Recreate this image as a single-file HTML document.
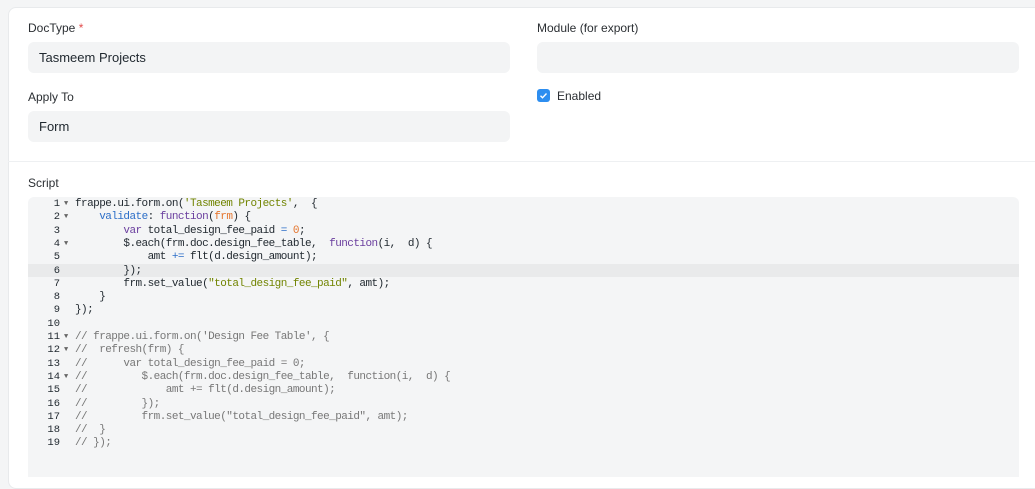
<!DOCTYPE html>
<html><head><meta charset="utf-8"><style>
body{margin:0;background:#f4f5f6;width:1035px;height:465px;overflow:hidden;font-family:"Liberation Sans",sans-serif;}
.card{position:absolute;left:8px;top:7px;width:1040px;height:480px;background:#fff;border:1px solid #e8eaec;border-radius:8px;}
.lbl{position:absolute;font-size:12px;color:#2b2f33;}
.inp{position:absolute;background:#f3f4f5;border-radius:6px;height:31px;font-size:13px;color:#1f272e;line-height:31px;padding-left:11px;box-sizing:border-box;}
.div{position:absolute;left:8px;top:161px;width:1030px;height:1px;background:#eef0f2;}
.ed{position:absolute;left:28px;top:197px;width:991px;height:280px;background:#f4f5f6;border-radius:6px 6px 0 0;font-family:"Liberation Mono",monospace;font-size:11px;letter-spacing:-0.55px;color:#1f272e;}
.ln{position:absolute;left:0;width:991px;height:13.3px;line-height:13.3px;white-space:pre;top:1px}
.n{position:absolute;left:2px;width:30px;text-align:right;color:#1f272e;letter-spacing:0;font-size:10.5px}
.a{position:absolute;left:36px;font-size:7px;color:#666;}
.c{position:absolute;left:47px;}
.k{color:#6a3e9e}.s{color:#718400}.num{color:#e4742c}.m{color:#777}.p{color:#2c6ec8}
</style></head><body>
<div class="card"></div>
<div class="lbl" style="left:28px;top:21px">DocType <span style="color:#e24c4c">*</span></div>
<div class="inp" style="left:28px;top:42px;width:482px">Tasmeem Projects</div>
<div class="lbl" style="left:537px;top:21px">Module (for export)</div>
<div class="inp" style="left:537px;top:42px;width:482px"></div>
<div class="lbl" style="left:28px;top:90px">Apply To</div>
<div class="inp" style="left:28px;top:111px;width:482px">Form</div>
<div style="position:absolute;left:537px;top:89px;width:13px;height:13px;background:#2d8ef0;border-radius:3px;"><svg width="13" height="13"><path d="M3.5 6.8l2 2 4-4.3" fill="none" stroke="#fff" stroke-width="1.4"/></svg></div>
<div class="lbl" style="left:557px;top:89px">Enabled</div>
<div class="div"></div>
<div class="lbl" style="left:28px;top:176px">Script</div>
<div class="ed">
<div style="position:absolute;left:0;top:67px;width:991px;height:13.3px;background:#e9eaeb"></div>
<div class="ln" style="top:1px"><span class="n">1</span><span class="a">▼</span><span class="c">frappe.ui.form.on(<span class="s">'Tasmeem Projects'</span>,  {</span></div>
<div class="ln" style="top:14.3px"><span class="n">2</span><span class="a">▼</span><span class="c">    <span class="p">validate</span>: <span class="k">function</span>(<span class="num">frm</span>) {</span></div>
<div class="ln" style="top:27.6px"><span class="n">3</span><span class="c">        <span class="k">var</span> total_design_fee_paid <span class="p">=</span> <span class="num">0</span>;</span></div>
<div class="ln" style="top:40.9px"><span class="n">4</span><span class="a">▼</span><span class="c">        $.each(frm.doc.design_fee_table,  <span class="k">function</span>(i,  d) {</span></div>
<div class="ln" style="top:54.2px"><span class="n">5</span><span class="c">            amt <span class="p">+=</span> flt(d.design_amount);</span></div>
<div class="ln" style="top:67.5px"><span class="n">6</span><span class="c">        });</span></div>
<div class="ln" style="top:80.8px"><span class="n">7</span><span class="c">        frm.set_value(<span class="s">"total_design_fee_paid"</span>, amt);</span></div>
<div class="ln" style="top:94.1px"><span class="n">8</span><span class="c">    }</span></div>
<div class="ln" style="top:107.4px"><span class="n">9</span><span class="c">});</span></div>
<div class="ln" style="top:120.7px"><span class="n">10</span></div>
<div class="ln m" style="top:134px"><span class="n">11</span><span class="a">▼</span><span class="c">// frappe.ui.form.on('Design Fee Table', {</span></div>
<div class="ln m" style="top:147.3px"><span class="n">12</span><span class="a">▼</span><span class="c">//  refresh(frm) {</span></div>
<div class="ln m" style="top:160.6px"><span class="n">13</span><span class="c">//      var total_design_fee_paid = 0;</span></div>
<div class="ln m" style="top:173.9px"><span class="n">14</span><span class="a">▼</span><span class="c">//         $.each(frm.doc.design_fee_table,  function(i,  d) {</span></div>
<div class="ln m" style="top:187.2px"><span class="n">15</span><span class="c">//             amt += flt(d.design_amount);</span></div>
<div class="ln m" style="top:200.5px"><span class="n">16</span><span class="c">//         });</span></div>
<div class="ln m" style="top:213.8px"><span class="n">17</span><span class="c">//         frm.set_value("total_design_fee_paid", amt);</span></div>
<div class="ln m" style="top:227.1px"><span class="n">18</span><span class="c">//  }</span></div>
<div class="ln m" style="top:240.4px"><span class="n">19</span><span class="c">// });</span></div>
</div>
</body></html>
